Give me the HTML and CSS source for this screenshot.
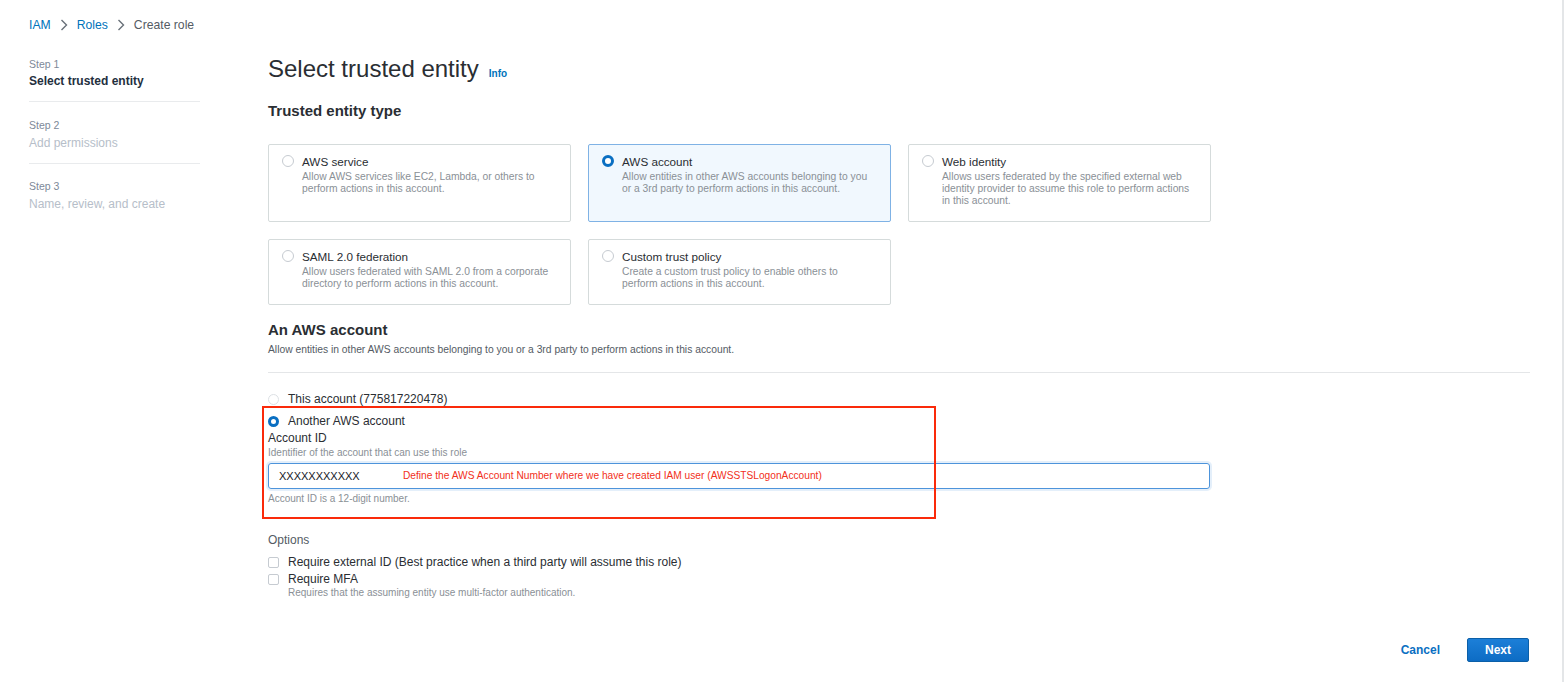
FILE: index.html
```html
<!DOCTYPE html>
<html lang="en">
<head>
<meta charset="utf-8">
<title>Create role</title>
<link rel="stylesheet" href="styles.css">
</head>
<body>
<div class="page">
  <nav class="crumbs">
    <a class="crumb-link">IAM</a>
    <svg class="crumb-sep" width="8" height="12" viewBox="0 0 8 12"><path d="M1.5 1 L6.5 6 L1.5 11" fill="none" stroke="#687078" stroke-width="1.4"/></svg>
    <a class="crumb-link">Roles</a>
    <svg class="crumb-sep" width="8" height="12" viewBox="0 0 8 12"><path d="M1.5 1 L6.5 6 L1.5 11" fill="none" stroke="#687078" stroke-width="1.4"/></svg>
    <span class="crumb-current">Create role</span>
  </nav>

  <div class="layout">
    <aside class="steps">
      <div class="step first">
        <div class="step-num">Step 1</div>
        <div class="step-name active">Select trusted entity</div>
      </div>
      <div class="step">
        <div class="step-num">Step 2</div>
        <div class="step-name">Add permissions</div>
      </div>
      <div class="step last">
        <div class="step-num">Step 3</div>
        <div class="step-name">Name, review, and create</div>
      </div>
    </aside>

    <main class="main">
      <h1 class="title">Select trusted entity <a class="info">Info</a></h1>
      <h2 class="section-title">Trusted entity type</h2>

      <div class="cards">
        <div class="card">
          <span class="radio"></span>
          <div class="card-body">
            <div class="card-title">AWS service</div>
            <div class="card-desc">Allow AWS services like EC2, Lambda, or others to perform actions in this account.</div>
          </div>
        </div>
        <div class="card selected">
          <span class="radio checked"></span>
          <div class="card-body">
            <div class="card-title">AWS account</div>
            <div class="card-desc">Allow entities in other AWS accounts belonging to you or a 3rd party to perform actions in this account.</div>
          </div>
        </div>
        <div class="card">
          <span class="radio"></span>
          <div class="card-body">
            <div class="card-title">Web identity</div>
            <div class="card-desc">Allows users federated by the specified external web identity provider to assume this role to perform actions in this account.</div>
          </div>
        </div>
        <div class="card">
          <span class="radio"></span>
          <div class="card-body">
            <div class="card-title">SAML 2.0 federation</div>
            <div class="card-desc">Allow users federated with SAML 2.0 from a corporate directory to perform actions in this account.</div>
          </div>
        </div>
        <div class="card">
          <span class="radio"></span>
          <div class="card-body">
            <div class="card-title">Custom trust policy</div>
            <div class="card-desc">Create a custom trust policy to enable others to perform actions in this account.</div>
          </div>
        </div>
      </div>

      <h2 class="section-title account-title">An AWS account</h2>
      <p class="section-desc">Allow entities in other AWS accounts belonging to you or a 3rd party to perform actions in this account.</p>
      <hr class="divider">

      <div class="account-choice">
        <label class="option-row">
          <span class="radio small faint"></span>
          <span class="option-label">This account (775817220478)</span>
        </label>
        <label class="option-row another">
          <span class="radio small checked"></span>
          <span class="option-label">Another AWS account</span>
        </label>
        <div class="field-label">Account ID</div>
        <div class="field-desc">Identifier of the account that can use this role</div>
        <div class="input-wrap">
          <div class="input">XXXXXXXXXXX</div>
          <span class="annotation">Define the AWS Account Number where we have created IAM user (AWSSTSLogonAccount)</span>
        </div>
        <div class="field-hint">Account ID is a 12-digit number.</div>
        <div class="red-box"></div>
      </div>

      <div class="options">
        <div class="options-title">Options</div>
        <label class="check-row">
          <span class="checkbox"></span>
          <span class="option-label">Require external ID (Best practice when a third party will assume this role)</span>
        </label>
        <label class="check-row">
          <span class="checkbox"></span>
          <span class="option-label">Require MFA</span>
        </label>
        <div class="check-desc">Requires that the assuming entity use multi-factor authentication.</div>
      </div>

      <div class="actions">
        <a class="cancel">Cancel</a>
        <button class="next">Next</button>
      </div>
    </main>
  </div>
</div>
</body>
</html>
```

FILE: styles.css
```css
* { box-sizing: border-box; }
html, body { margin: 0; padding: 0; background: #fff; }
body {
  font-family: "Liberation Sans", Arial, Helvetica, sans-serif;
  color: #16191f;
}
.page {
  width: 1564px;
  min-height: 682px;
  padding: 15px 0 0 29px;
  border-right: 2px solid #e4e6e8;
}
.crumbs {
  display: flex;
  align-items: center;
  height: 20px;
  font-size: 12.2px;
  gap: 9px;
}
.crumb-link { color: #0073bb; }
.crumb-sep { display: block; }
.crumb-current { color: #545b64; }

.layout {
  display: grid;
  grid-template-columns: 171px 1262px;
  column-gap: 68px;
  margin-top: 15px;
}

/* sidebar steps */
.step {
  padding: 16px 0 12px;
  border-bottom: 1px solid #e9ebed;
}
.step.first { padding-top: 7px; }
.step.last { border-bottom: none; padding-top: 15px; }
.step-num {
  font-size: 10.5px;
  line-height: 14px;
  color: #7d8998;
}
.step-name {
  margin-top: 3px;
  font-size: 12px;
  line-height: 16px;
  color: #b6bec9;
}
.step-name.active { color: #232f3e; font-weight: bold; margin-top: 2px; }

/* main */
.title {
  margin: 5px 0 0;
  font-size: 24px;
  line-height: 28px;
  font-weight: normal;
  color: #2a2e33;
  display: flex;
  align-items: baseline;
  gap: 10px;
}
.info {
  font-size: 10px;
  font-weight: bold;
  color: #0073bb;
}
.section-title {
  margin: 14px 0 0;
  font-size: 15px;
  line-height: 18px;
  font-weight: bold;
  color: #2a2e33;
}

.cards {
  margin-top: 24px;
  display: grid;
  grid-template-columns: repeat(3, 303px);
  column-gap: 17px;
  row-gap: 17px;
}
.card {
  display: flex;
  align-items: flex-start;
  gap: 8px;
  border: 1px solid #d5dbdb;
  border-radius: 2px;
  padding: 10px 20px 14px 13px;
  background: #fff;
}
.card.selected {
  background: #f1f8fe;
  border-color: #7fb2e5;
}
.radio {
  flex: none;
  width: 12px;
  height: 12px;
  border-radius: 50%;
  border: 1px solid #c6cbd1;
  background: #fff;
}
.radio.checked { border: 3.5px solid #0a6fc2; }
.radio.small { width: 11px; height: 11px; }
.radio.faint { border-color: #dde1e5; }
.card-title {
  font-size: 11.7px;
  line-height: 14px;
  color: #2a2e33;
}
.card-desc {
  margin-top: 2px;
  font-size: 10.3px;
  line-height: 12px;
  color: #8a9096;
}

.account-title { margin-top: 16px; }
.section-desc {
  margin: 5px 0 0;
  font-size: 10.3px;
  line-height: 12px;
  color: #545b64;
}
.divider {
  margin: 16px 0 0;
  border: none;
  border-top: 1px solid #e4e6e8;
  height: 0;
}

.account-choice {
  position: relative;
  margin-top: 18px;
}
.option-row, .check-row {
  display: flex;
  align-items: center;
  gap: 9px;
  height: 16px;
}
.option-row.another { margin-top: 6px; }
.option-label {
  font-size: 12px;
  color: #2a2e33;
}
.field-label {
  margin-top: 2px;
  font-size: 12px;
  line-height: 14px;
  color: #2a2e33;
}
.field-desc, .field-hint {
  font-size: 10px;
  line-height: 12px;
  color: #8a9096;
}
.field-desc { margin-top: 2px; }
.input-wrap {
  position: relative;
  margin-top: 4px;
  width: 942px;
}
.input {
  height: 26px;
  border: 1px solid #4d94db;
  border-radius: 3px;
  box-shadow: 0 0 0 2px rgba(77, 148, 219, 0.15);
  padding: 0 10px;
  font-size: 11px;
  line-height: 24px;
  color: #16191f;
}
.annotation {
  position: absolute;
  left: 135px;
  top: 0;
  line-height: 26px;
  font-size: 10.2px;
  color: #f2301b;
}
.field-hint { margin-top: 4px; }
.red-box {
  position: absolute;
  left: -6px;
  top: 15px;
  width: 674px;
  height: 113px;
  border: 2px solid #fa2a0a;
  pointer-events: none;
}

.options { margin-top: 28px; }
.options-title {
  font-size: 12px;
  line-height: 14px;
  color: #545b64;
}
.check-row:first-of-type { margin-top: 7px; }
.check-row + .check-row { margin-top: 1px; }
.checkbox {
  flex: none;
  width: 11px;
  height: 11px;
  border: 1px solid #c6cbd1;
  border-radius: 2px;
  background: #fff;
}
.check-desc {
  padding-left: 20px;
  font-size: 10px;
  line-height: 12px;
  color: #8a9096;
}

.actions {
  margin-top: 39px;
  display: flex;
  justify-content: flex-end;
  align-items: center;
  gap: 27px;
  padding-right: 1px;
}
.cancel {
  font-size: 12px;
  font-weight: bold;
  color: #0a6fc2;
}
.next {
  width: 62px;
  height: 24px;
  border: 1px solid #0b5fa8;
  border-radius: 2px;
  background: linear-gradient(#1c7fd8, #0d6cc4);
  color: #fff;
  font-family: "Liberation Sans", Arial, sans-serif;
  font-size: 12px;
  font-weight: bold;
  padding: 0;
}
```
